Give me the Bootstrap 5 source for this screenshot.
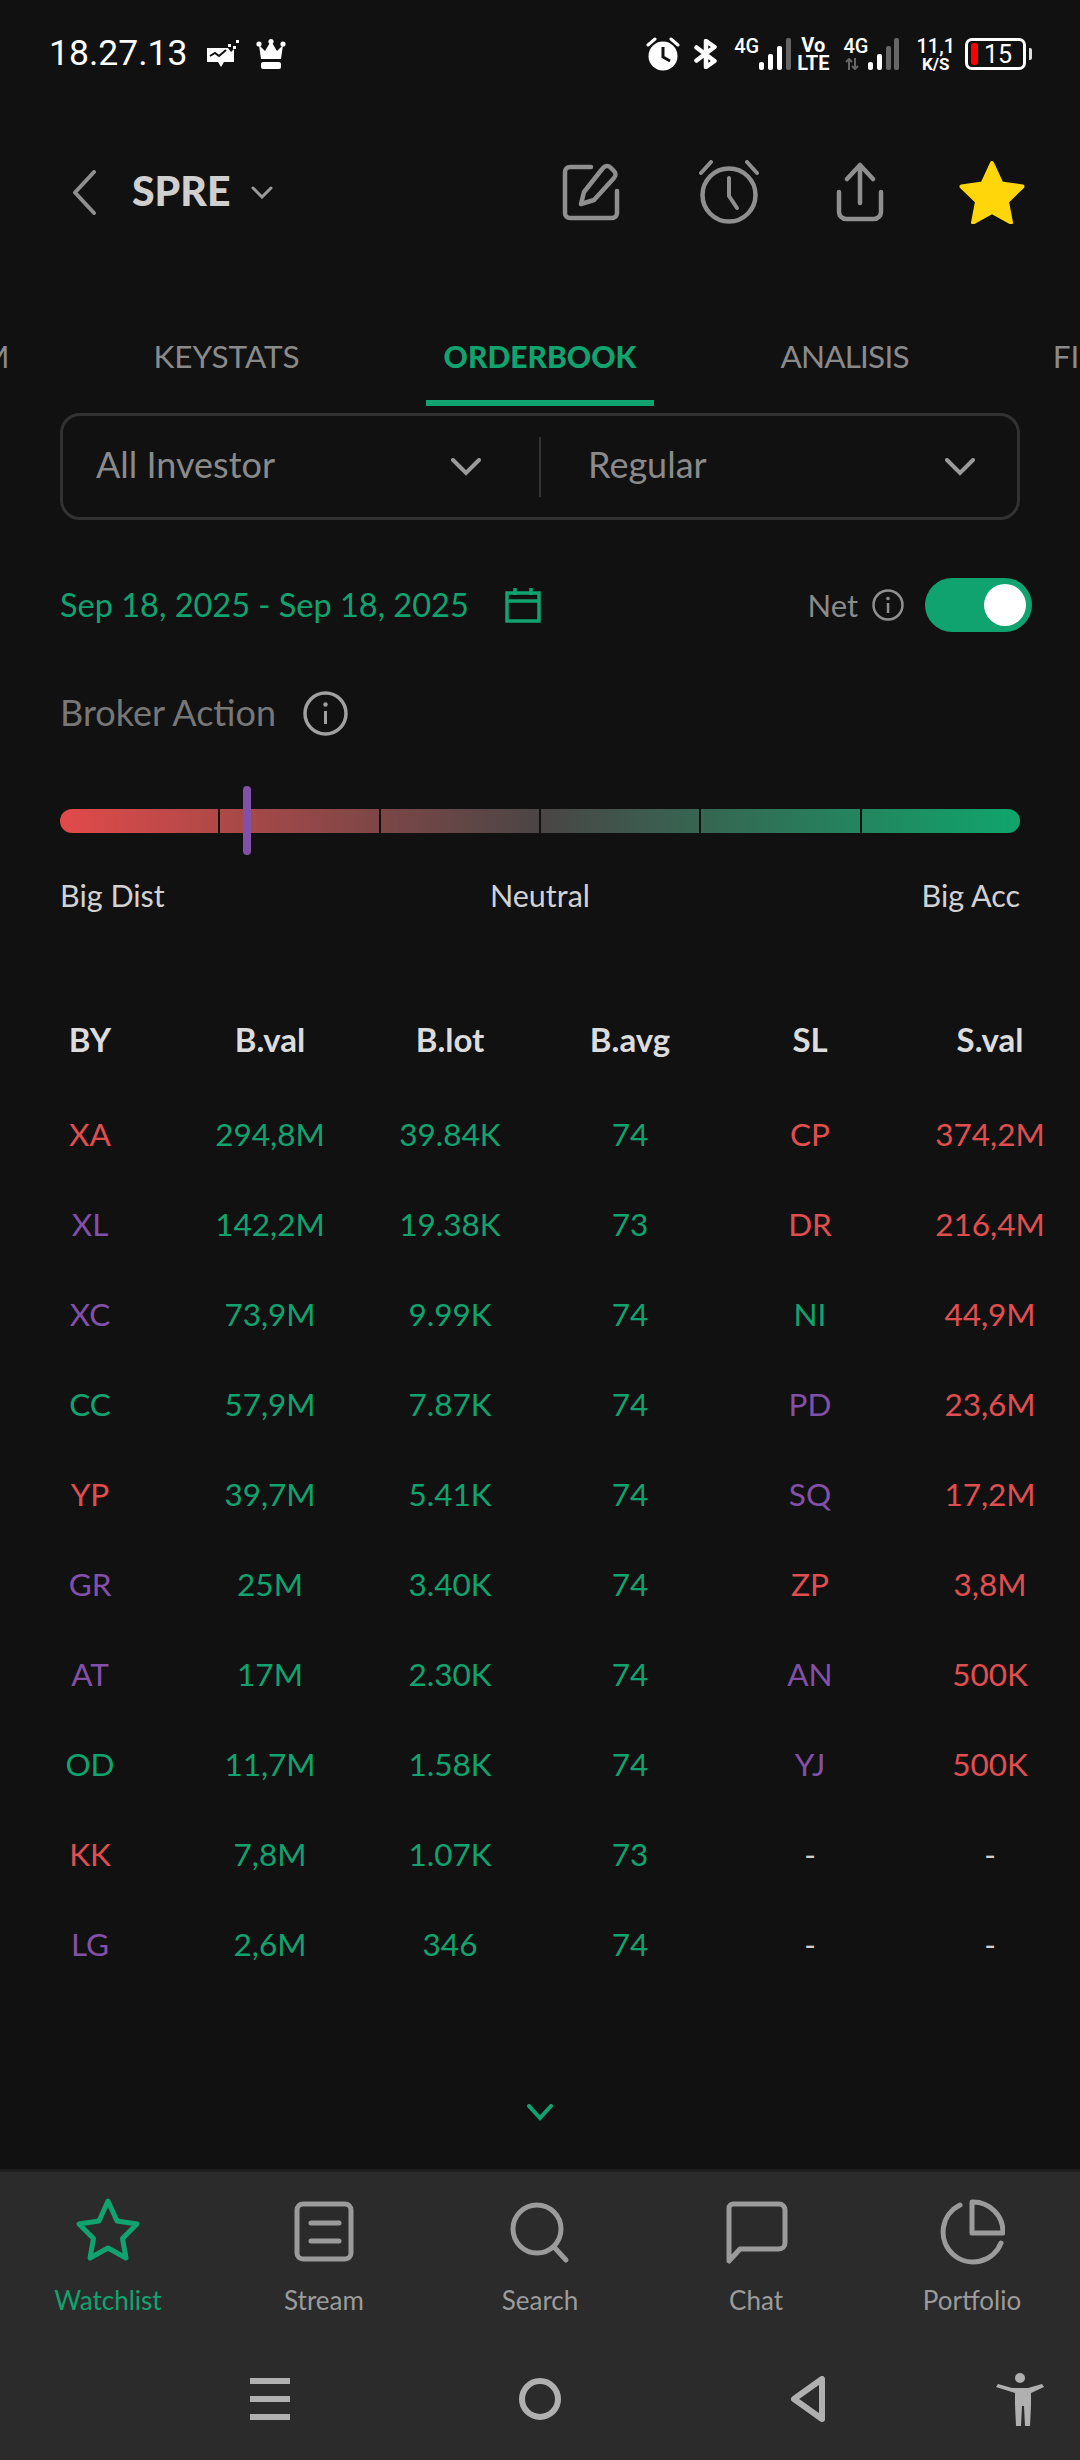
<!DOCTYPE html>
<html lang="en">
<head>
<meta charset="utf-8">
<meta name="viewport" content="width=device-width, initial-scale=1">
<title>SPRE Orderbook</title>
<link href="https://cdn.jsdelivr.net/npm/bootstrap@5.3.3/dist/css/bootstrap.min.css" rel="stylesheet">
<style>
    html, body { background: #111112; }
    body { font-family: Lato, "Open Sans", sans-serif; }
    .screen { width: 1080px; height: 2460px; overflow: hidden; color: #d4d4d4; }
    svg { display: block; flex: none; }

    .status-bar { height: 108px; padding: 0 48px 0 49px; color: #fff; font-family: Roboto, sans-serif; }
    .clock { font-size: 35.5px; line-height: 1; margin-right: 20px; }
    .net-tag { font-size: 20px; font-weight: 500; line-height: 17px; }
    .net-arrows { margin: 3px 0 0 2px; }
    .speed-tag { font-size: 20px; font-weight: 500; line-height: 20px; text-align: center; margin: 0 10px 0 17px; }
    .speed-tag span { display: block; font-size: 17px; line-height: 17px; font-weight: 700; }
    .volte { font-size: 20px; font-weight: 700; line-height: 18px; text-align: center; margin: 0 14px 0 5px; }
    .batt { width: 61px; height: 32px; border: 3px solid #fff; border-radius: 7px; padding: 0 0 0 3px; font-size: 25px; line-height: 1; gap: 6px; }
    .batt-fill { width: 7px; height: 22px; background: #f00; border-radius: 3px; }
    .batt-nub { width: 3px; height: 12px; background: #ddd; border-radius: 0 2px 2px 0; margin-left: 3px; }

    .top-bar { height: 168px; padding: 0 54px 0 72px; }
    .ticker { font-size: 41px; font-weight: 900; color: #cfcfcf; line-height: 1; margin: 0 21px 0 36px; padding-bottom: 3px; }

    .tab-strip { height: 130px; gap: 108px; white-space: nowrap; }
    .tab-side { flex: 1 1 0; min-width: 0; gap: 108px; }
    .tab-item { height: 69px; padding: 0 18px; font-size: 31.5px; line-height: 38px; color: #8a8a8a; border-bottom: 6px solid transparent; }
    .tab-item.is-on { flex: none; font-size: 30px; color: #10a36f; font-weight: 900; border-bottom-color: #10a36f; }
    .tab-tight { letter-spacing: -.8px; }

    .filter-box { height: 107px; margin: 7px 60px 0; border: 3px solid #323233; border-radius: 20px; font-size: 36px; color: #8a8a8a; }
    .filter-cell { flex: 0 0 calc(50% - 1px); padding: 0 58px 0 33px; }
    .filter-rule + .filter-cell { padding: 0 42px 0 47px; }
    .filter-cell span { padding-bottom: 5px; }
    .filter-rule { width: 2px; height: 60px; background: #333; }

    .date-row { height: 54px; margin: 58px 48px 0 60px; }
    .date-text { font-size: 32.5px; color: #10a36f; margin-right: 36px; }
    .net-label { font-size: 31px; color: #8a8a8a; margin-right: 14px; }
    .net-toggle { width: 107px; height: 54px; margin-left: 21px; border-radius: 27px; background: #10a36f; padding: 0 6px; }
    .net-knob { width: 42px; height: 42px; border-radius: 50%; background: #fff; }

    .action-row { height: 44px; margin: 59px 60px 0; font-size: 36px; color: #777; gap: 27px; }
    .action-row span { padding-bottom: 3px; }
    .action-meter { position: relative; height: 69px; margin: 51px 60px 0; padding-top: 23px; }
    .meter-track { height: 24px; border-radius: 12px; overflow: hidden; gap: 2px; background: linear-gradient(90deg, #e24a4a 0%, #4a4545 50%, #10a56c 100%); }
    .meter-track i { flex: 1 1 0; box-shadow: 0 0 0 1px #111112; }
    .meter-pin { position: absolute; left: 183px; top: 0; width: 8px; height: 69px; border-radius: 4px; background: #8350a8; }
    .meter-labels { height: 40px; margin: 22px 60px 0; font-size: 30.5px; line-height: 37px; color: #d2d2d2; }
    .meter-labels span { flex: 1 1 0; }

    .book { margin-top: 79px; }
    .book-row { height: 90px; text-align: center; font-size: 31.5px; line-height: 89px; color: #10a36f; }
    .book-head { color: #dcdcdc; font-weight: 700; font-size: 33px; line-height: 87px; margin-bottom: 4px; }
    .red-txt { color: #e04f4f; }
    .pur-txt { color: #8350a8; }
    .grn-txt { color: #10a36f; }
    .dim-txt { color: #cfcfcf; }

    .more-btn { margin-top: 114px; }
    .bottom-nav { margin-top: 48px; height: 291px; background: #2b2b2c; border-top: 3px solid #1f1f20; }
    .nav-tabs-row { height: 155px; padding-top: 25px; }
    .nav-cell { flex: 1 1 0; font-size: 26px; line-height: 32px; color: #9b9b9b; }
    .nav-cell svg { margin-bottom: 19px; }
    .nav-cell.is-on { color: #10a36f; }
    .sys-nav { position: relative; height: 133px; }
</style>
</head>
<body>
<div class="screen">

    <div class="status-bar d-flex align-items-center justify-content-between">
        <div class="d-flex align-items-center">
            <span class="clock">18.27.13</span>
            <svg width="33" height="28" viewBox="0 0 33 28" class="me-3"><path d="M0 8h21l3 4 3-3v13H17l-3 5-3-5H0z" fill="#fff"/><path d="M3 16l5-3 4 3 7-6" fill="none" stroke="#111" stroke-width="2"/><rect x="21" y="4" width="3" height="3" fill="#fff"/><rect x="26" y="6" width="3" height="3" fill="#fff"/><rect x="29" y="0" width="3" height="3" fill="#fff"/></svg>
            <svg width="30" height="30" viewBox="0 0 30 30"><path d="M3 6l6 6 6-10 6 10 6-6-2 14H5z" fill="#fff"/><circle cx="3" cy="5" r="2.6" fill="#fff"/><circle cx="15" cy="2.6" r="2.6" fill="#fff"/><circle cx="27" cy="5" r="2.6" fill="#fff"/><rect x="5" y="23" width="20" height="7" rx="2" fill="#fff"/></svg>
        </div>
        <div class="d-flex align-items-center">
            <svg width="34" height="34" viewBox="0 0 34 34" style="margin-right:14px"><circle cx="17" cy="19" r="14.5" fill="#fff"/><path d="M17 10v10l7 4" fill="none" stroke="#111" stroke-width="3"/><path d="M2 8l7-6M32 8l-7-6" stroke="#fff" stroke-width="3" stroke-linecap="round"/></svg>
            <svg width="24" height="30" viewBox="0 0 24 30" style="margin-right:16px"><path d="M2.500 8.500l18 13.500-8.500 6V2l8.500 6-18 13.500" fill="none" stroke="#fff" stroke-width="4.500" stroke-linecap="round" stroke-linejoin="round"/></svg>
            <div class="d-flex" style="height:32px">
                <span class="net-tag">4G</span>
                <svg width="33" height="32" viewBox="0 0 33 32"><rect x="0" y="24" width="5" height="8" rx="2" fill="#fff"/><rect x="9" y="16" width="5" height="16" rx="2" fill="#fff"/><rect x="18" y="8" width="5" height="24" rx="2" fill="#fff"/><rect x="27" y="0" width="5" height="32" rx="2" fill="#666"/></svg>
            </div>
            <div class="volte">Vo<br>LTE</div>
            <div class="d-flex" style="height:32px">
                <div class="d-flex flex-column">
                    <span class="net-tag">4G</span>
                    <svg class="net-arrows" width="14" height="12" viewBox="0 0 14 12"><path d="M4 12V1M1 4l3-3 3 3M10 0v11M7 8l3 3 3-3" fill="none" stroke="#666" stroke-width="2"/></svg>
                </div>
                <svg width="31" height="32" viewBox="0 0 31 32"><rect x="0" y="24" width="5" height="8" rx="2" fill="#fff"/><rect x="9" y="16" width="5" height="16" rx="2" fill="#fff"/><rect x="18" y="8" width="5" height="24" rx="2" fill="#666"/><rect x="26" y="0" width="5" height="32" rx="2" fill="#666"/></svg>
            </div>
            <div class="speed-tag">11,1<span>K/S</span></div>
            <div class="d-flex align-items-center">
                <div class="batt d-flex align-items-center"><div class="batt-fill"></div>15</div>
                <div class="batt-nub"></div>
            </div>
        </div>
    </div>

    <div class="top-bar d-flex align-items-center">
        <svg width="24" height="45" viewBox="0 0 24 45"><path d="M22 2L3 22.500 22 43" fill="none" stroke="#8f8f8f" stroke-width="4" stroke-linecap="round" stroke-linejoin="round"/></svg>
        <span class="ticker">SPRE</span>
        <svg width="22" height="13" viewBox="0 0 22 13"><path d="M2 2l9 9 9-9" fill="none" stroke="#9a9a9a" stroke-width="3" stroke-linecap="round"/></svg>
        <div class="d-flex align-items-center ms-auto">
            <svg width="58" height="58" viewBox="0 0 58 58" style="margin-right:78px"><path d="M29 4H8a5 5 0 0 0-5 5v41a5 5 0 0 0 5 5h42a5 5 0 0 0 5-5V28" fill="none" stroke="#8f8f8f" stroke-width="4.500" stroke-linecap="round"/><path d="M19 41l3-12L41 5a5 5 0 0 1 8 0l3 3a5 5 0 0 1 0 7L32 37z" fill="none" stroke="#8f8f8f" stroke-width="4.500" stroke-linejoin="round"/></svg>
            <svg width="62" height="64" viewBox="0 0 62 64" style="margin-right:76px"><circle cx="31" cy="35" r="26.500" fill="none" stroke="#8f8f8f" stroke-width="4.500"/><path d="M31 18v18l8 12" fill="none" stroke="#8f8f8f" stroke-width="4" stroke-linecap="round"/><path d="M3 13L13 2M59 13L49 2" stroke="#8f8f8f" stroke-width="4" stroke-linecap="round"/></svg>
            <svg width="48" height="60" viewBox="0 0 48 60" style="margin-right:74px"><path d="M3 30v20a7 7 0 0 0 7 7h28a7 7 0 0 0 7-7V30" fill="none" stroke="#8f8f8f" stroke-width="4.500" stroke-linecap="round"/><path d="M24 41V4M11 17L24 3l13 14" fill="none" stroke="#8f8f8f" stroke-width="4.500" stroke-linecap="round" stroke-linejoin="round"/></svg>
            <svg width="68" height="64" viewBox="0 0 68 64"><path d="M34 3l9.500 20.500 21 3-15.500 15 4 21L34 52 15 62.500l4-21L3.500 26.500l21-3z" fill="#ffd60a" stroke="#ffd60a" stroke-width="4" stroke-linejoin="round"/></svg>
        </div>
    </div>

    <div class="tab-strip d-flex align-items-end overflow-hidden">
        <div class="tab-side d-flex justify-content-end">
            <div class="tab-item">STREAM</div>
            <div class="tab-item">KEYSTATS</div>
        </div>
        <div class="tab-item is-on">ORDERBOOK</div>
        <div class="tab-side d-flex">
            <div class="tab-item tab-tight">ANALISIS</div>
            <div class="tab-item">FINANCIAL</div>
        </div>
    </div>

    <div class="filter-box d-flex align-items-center">
        <div class="filter-cell d-flex align-items-center justify-content-between">
            <span>All Investor</span>
            <svg width="30" height="18" viewBox="0 0 30 18"><path d="M2 2l13 13L28 2" fill="none" stroke="#9a9a9a" stroke-width="4" stroke-linecap="round"/></svg>
        </div>
        <div class="filter-rule"></div>
        <div class="filter-cell d-flex align-items-center justify-content-between">
            <span>Regular</span>
            <svg width="30" height="18" viewBox="0 0 30 18"><path d="M2 2l13 13L28 2" fill="none" stroke="#9a9a9a" stroke-width="4" stroke-linecap="round"/></svg>
        </div>
    </div>

    <div class="date-row d-flex align-items-center">
        <span class="date-text">Sep 18, 2025 - Sep 18, 2025</span>
        <svg width="36" height="36" viewBox="0 0 36 36"><rect x="2" y="6" width="32" height="28" fill="none" stroke="#10a36f" stroke-width="3.500"/><path d="M2 14h32M10 1v7M26 1v7" stroke="#10a36f" stroke-width="3.500"/></svg>
        <span class="net-label ms-auto">Net</span>
        <svg width="32" height="32" viewBox="0 0 32 32"><circle cx="16" cy="16" r="14.500" fill="none" stroke="#8f8f8f" stroke-width="2.500"/><rect x="14.800" y="14" width="2.500" height="10" fill="#8f8f8f"/><circle cx="16" cy="9.500" r="1.800" fill="#8f8f8f"/></svg>
        <div class="net-toggle d-flex align-items-center justify-content-end"><div class="net-knob"></div></div>
    </div>

    <div class="action-row d-flex align-items-center">
        <span>Broker Action</span>
        <svg width="45" height="45" viewBox="0 0 45 45"><circle cx="22.500" cy="22.500" r="20.500" fill="none" stroke="#a0a0a0" stroke-width="3.500"/><rect x="21" y="20" width="3" height="13" fill="#a0a0a0"/><circle cx="22.500" cy="13.500" r="2.200" fill="#a0a0a0"/></svg>
    </div>

    <div class="action-meter">
        <div class="meter-track d-flex"><i></i><i></i><i></i><i></i><i></i><i></i></div>
        <div class="meter-pin"></div>
    </div>
    <div class="meter-labels d-flex">
        <span>Big Dist</span><span class="text-center">Neutral</span><span class="text-end">Big Acc</span>
    </div>

    <div class="book" id="book">
        <div class="row g-0 book-row book-head">
            <div class="col-2">BY</div><div class="col-2">B.val</div><div class="col-2">B.lot</div><div class="col-2">B.avg</div><div class="col-2">SL</div><div class="col-2">S.val</div>
        </div>
    </div>

    <div class="more-btn d-flex justify-content-center">
        <svg width="26" height="17" viewBox="0 0 26 17"><path d="M2 2l11 12L24 2" fill="none" stroke="#10a36f" stroke-width="4" stroke-linecap="round"/></svg>
    </div>

    <div class="bottom-nav">
        <div class="nav-tabs-row d-flex">
            <div class="nav-cell is-on d-flex flex-column align-items-center">
                <svg width="66" height="68" viewBox="0 0 66 68"><path d="M33 4l9 20 20 3-14.500 14.500L51 61 33 51 15 61l3.500-19.500L4 27l20-3z" fill="none" stroke="#10a36f" stroke-width="5" stroke-linejoin="round"/></svg>
                Watchlist
            </div>
            <div class="nav-cell d-flex flex-column align-items-center">
                <svg width="66" height="68" viewBox="0 0 66 68"><rect x="6" y="7" width="54" height="55" rx="6" fill="none" stroke="#9b9b9b" stroke-width="5"/><path d="M20 26h28M20 44h28" stroke="#9b9b9b" stroke-width="5" stroke-linecap="round"/></svg>
                Stream
            </div>
            <div class="nav-cell d-flex flex-column align-items-center">
                <svg width="66" height="68" viewBox="0 0 66 68"><circle cx="30" cy="32" r="24" fill="none" stroke="#9b9b9b" stroke-width="5"/><path d="M47 50l12 13" stroke="#9b9b9b" stroke-width="5" stroke-linecap="round"/></svg>
                Search
            </div>
            <div class="nav-cell d-flex flex-column align-items-center">
                <svg width="66" height="68" viewBox="0 0 66 68"><path d="M10 7h46a6 6 0 0 1 6 6v33a6 6 0 0 1-6 6H17L6 64V11a4 4 0 0 1 4-4z" fill="none" stroke="#9b9b9b" stroke-width="5" stroke-linejoin="round"/></svg>
                Chat
            </div>
            <div class="nav-cell d-flex flex-column align-items-center">
                <svg width="66" height="68" viewBox="0 0 66 68"><path d="M21 8a30 30 0 1 0 41 38" fill="none" stroke="#9b9b9b" stroke-width="5" stroke-linecap="round"/><path d="M33 5a30 30 0 0 1 31 31H33z" fill="none" stroke="#9b9b9b" stroke-width="5" stroke-linejoin="round"/></svg>
                Portfolio
            </div>
        </div>
        <div class="sys-nav">
            <svg class="position-absolute" style="left:250px;top:51px" width="40" height="42" viewBox="0 0 40 42"><path d="M0 0h40v6H0zM0 18h40v6H0zM0 36h40v6H0z" fill="#b0b0b0"/></svg>
            <svg class="position-absolute" style="left:519px;top:51px" width="42" height="42" viewBox="0 0 42 42"><circle cx="21" cy="21" r="18" fill="none" stroke="#b0b0b0" stroke-width="6"/></svg>
            <svg class="position-absolute" style="left:790px;top:49px" width="36" height="46" viewBox="0 0 36 46"><path d="M32 3v40L4 23z" fill="none" stroke="#b0b0b0" stroke-width="6" stroke-linejoin="round"/></svg>
            <svg class="position-absolute" style="left:996px;top:46px" width="48" height="54" viewBox="0 0 48 54"><circle cx="24" cy="5" r="5" fill="#b0b0b0"/><path d="M0 14l2-3 14 4h16l14-4 2 3-13 6v12l-1 21h-5l-1-20h-2l-1 20h-5l-1-21V20z" fill="#b0b0b0"/></svg>
        </div>
    </div>
</div>

<script>
    // BY, B.val, B.lot, B.avg, SL, S.val; r = red, p = purple, g = green, d = no broker
    const rows = [
        ['XA','r','294,8M','39.84K','74','CP','r','374,2M'],
        ['XL','p','142,2M','19.38K','73','DR','r','216,4M'],
        ['XC','p','73,9M','9.99K','74','NI','g','44,9M'],
        ['CC','g','57,9M','7.87K','74','PD','p','23,6M'],
        ['YP','r','39,7M','5.41K','74','SQ','p','17,2M'],
        ['GR','p','25M','3.40K','74','ZP','r','3,8M'],
        ['AT','p','17M','2.30K','74','AN','p','500K'],
        ['OD','g','11,7M','1.58K','74','YJ','p','500K'],
        ['KK','r','7,8M','1.07K','73','-','d','-'],
        ['LG','p','2,6M','346','74','-','d','-']
    ];
    const tone = { r: 'red-txt', p: 'pur-txt', g: 'grn-txt', d: 'dim-txt' };
    const book = document.getElementById('book');
    rows.forEach((r) => {
        const el = document.createElement('div');
        el.className = 'row g-0 book-row';
        el.innerHTML = `
            <div class="col-2 ${tone[r[1]]}">${r[0]}</div>
            <div class="col-2">${r[2]}</div>
            <div class="col-2">${r[3]}</div>
            <div class="col-2">${r[4]}</div>
            <div class="col-2 ${tone[r[6]]}">${r[5]}</div>
            <div class="col-2 ${r[6] === 'd' ? 'dim-txt' : 'red-txt'}">${r[7]}</div>`;
        book.appendChild(el);
    });
</script>
<script src="https://cdn.jsdelivr.net/npm/bootstrap@5.3.3/dist/js/bootstrap.bundle.min.js"></script>
</body>
</html>
